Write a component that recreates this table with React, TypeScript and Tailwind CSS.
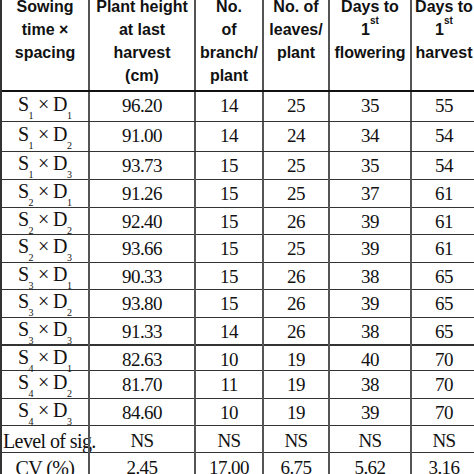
import React from "react";

type Row = { s: string; d: string; v: string[]; h: number; thick?: boolean };

const rows: Row[] = [
  { s: "1", d: "1", v: ["96.20", "14", "25", "35", "55"], h: 30 },
  { s: "1", d: "2", v: ["91.00", "14", "24", "34", "54"], h: 30 },
  { s: "1", d: "3", v: ["93.73", "15", "25", "35", "54"], h: 28 },
  { s: "2", d: "1", v: ["91.26", "15", "25", "37", "61"], h: 28 },
  { s: "2", d: "2", v: ["92.40", "15", "26", "39", "61"], h: 27 },
  { s: "2", d: "3", v: ["93.66", "15", "25", "39", "61"], h: 28 },
  { s: "3", d: "1", v: ["90.33", "15", "26", "38", "65"], h: 27 },
  { s: "3", d: "2", v: ["93.80", "15", "26", "39", "65"], h: 28 },
  { s: "3", d: "3", v: ["91.33", "14", "26", "38", "65"], h: 28, thick: true },
  { s: "4", d: "1", v: ["82.63", "10", "19", "40", "70"], h: 25 },
  { s: "4", d: "2", v: ["81.70", "11", "19", "38", "70"], h: 28 },
  { s: "4", d: "3", v: ["84.60", "10", "19", "39", "70"], h: 27 },
];

const grid = "grid grid-cols-[86px_106px_68px_66px_82px_66px]";
const vline = "border-l-2 border-[#555]";
const serif = { fontFamily: '"Liberation Serif", "Times New Roman", serif' };
const sans = { fontFamily: '"Liberation Sans", Arial, sans-serif' };

function Sub({ n }: { n: string }) {
  return <span className="text-[10px] align-[-8px] leading-none tracking-normal">{n}</span>;
}

function HeadCell({ lines, first }: { lines: React.ReactNode[]; first?: boolean }) {
  return (
    <div className={`flex flex-col items-center ${first ? "" : vline}`}>
      {lines.map((l, i) => (
        <div key={i} className="leading-[23px] whitespace-nowrap">
          {l}
        </div>
      ))}
    </div>
  );
}

const First = () => (
  <span>
    1<sup className="text-[10px] leading-none align-[6px] font-bold">st</sup>
  </span>
);

export default function App() {
  return (
    <div className="w-[474px] h-[474px] overflow-hidden bg-white text-[#111]">
      <div className="w-[476px] -mt-[5px] border-l-2 border-[#333]">
        <div
          className={`${grid} h-[97px] border-b-2 border-[#111] text-[16px] font-bold`}
          style={sans}
        >
          <HeadCell first lines={["Sowing", "time ×", "spacing"]} />
          <HeadCell lines={["Plant height", "at last", "harvest", "(cm)"]} />
          <HeadCell lines={["No.", "of", "branch/", "plant"]} />
          <HeadCell lines={["No. of", "leaves/", "plant"]} />
          <HeadCell lines={["Days to", <First key="f" />, "flowering"]} />
          <HeadCell lines={["Days to", <First key="h" />, "harvest"]} />
        </div>
        <div style={serif}>
          {rows.map((r, i) => (
            <div
              key={i}
              className={`${grid} ${r.thick ? "border-b-2" : "border-b"} border-[#333] text-[19px] tracking-[-0.6px]`}
              style={{ height: r.h }}
            >
              <div className="flex items-center justify-center whitespace-nowrap text-[20px] -mt-[4px]">
                <span>
                  S<Sub n={r.s} /> × D<Sub n={r.d} />
                </span>
              </div>
              {r.v.map((v, j) => (
                <div key={j} className={`flex items-center justify-center ${vline}`}>
                  {v}
                </div>
              ))}
            </div>
          ))}
          <div className={`${grid} h-[27px] border-b border-[#333] text-[19px] tracking-[-0.6px]`}>
            <div className="flex items-center justify-start pl-[1px] whitespace-nowrap text-[20px]">
              Level of sig.
            </div>
            {["NS", "NS", "NS", "NS", "NS"].map((v, j) => (
              <div key={j} className={`flex items-center justify-center ${vline}`}>
                {v}
              </div>
            ))}
          </div>
          <div className={`${grid} h-[28px] text-[19px] tracking-[-0.6px]`}>
            <div className="flex items-center justify-center whitespace-nowrap text-[20px]">CV (%)</div>
            {["2.45", "17.00", "6.75", "5.62", "3.16"].map((v, j) => (
              <div key={j} className={`flex items-center justify-center ${vline}`}>
                {v}
              </div>
            ))}
          </div>
        </div>
      </div>
    </div>
  );
}
